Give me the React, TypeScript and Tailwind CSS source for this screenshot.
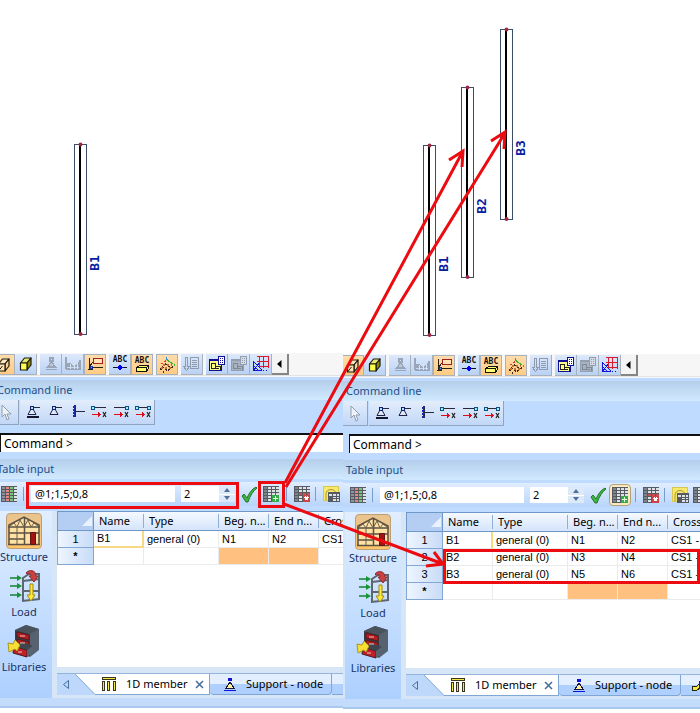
import React from "react";
import type { ReactNode } from "react";

type Member = { x: number; y: number; name: string };
type Row = { id: string; name: string; type: string; beg: string; end: string; cross: string };

const firstRow: Row = { id: "1", name: "B1", type: "general (0)", beg: "N1", end: "N2", cross: "CS1 - " };
const copies: Row[] = [
  { id: "2", name: "B2", type: "general (0)", beg: "N3", end: "N4", cross: "CS1 - " },
  { id: "3", name: "B3", type: "general (0)", beg: "N5", end: "N6", cross: "CS1 - " },
];

function Icon({ size = 20, children }: { size?: number; children: ReactNode }) {
  return (
    <svg width={size} height={size} viewBox={`0 0 ${size} ${size}`} className="block shrink-0" fill="none" shapeRendering="crispEdges" aria-hidden="true">
      {children}
    </svg>
  );
}

function Box({ yellow }: { yellow?: boolean }) {
  return (
    <Icon>
      <g shapeRendering="auto" stroke="#1c1a10" strokeWidth="1.2" strokeLinejoin="round">
        <path d="m4.500 9 4-5h6.500l-4 5z" fill={yellow ? "#e8e870" : "#fde6bd"} />
        <path d="m11 9 4-5v7l-4 5z" fill={yellow ? "#8c8c00" : "#fbd19a"} />
        <path d="M4.500 9H11v7H4.500z" fill={yellow ? "#ffff50" : "#ffe2b4"} />
        {!yellow && <path d="m4.500 16 4-5" strokeWidth="1" />}
      </g>
    </Icon>
  );
}

function GreySupport() {
  return (
    <Icon>
      <path d="M9 4h3v3H9zM10.500 7v3M5 15.500h11" stroke="#9aa6b8" strokeWidth="1.500" />
      <path d="m10.500 8-4 5h8z" fill="#bcc8d8" stroke="#9aa6b8" strokeWidth="1.500" />
    </Icon>
  );
}

function GreyLoad() {
  return (
    <Icon>
      <path d="M3 3v12M3 14.500h15M17 6v9" stroke="#9aa6b8" strokeWidth="2" />
      <path d="M4 9h3l3 3 4-2 3-4v7H4z" fill="#9aa6b8" />
      <path d="M7.500 10v5M11.500 9v6M14.500 9v6" stroke="#d7e4f6" />
    </Icon>
  );
}

function Flag() {
  return (
    <Icon>
      <path d="M8.500 3.500h9v5h-9z" stroke="#a32020" fill="#ffe2b6" />
      <path d="M4.500 3v12M3 14.500h5M8 12.500h10M5 11l3-4" stroke="#262015" />
      <path d="M5.500 11.500h2v2h-2z" fill="#46b0e8" stroke="#1734a0" />
    </Icon>
  );
}

function Abc({ box }: { box?: boolean }) {
  return (
    <Icon>
      <text x="10" y="8" textAnchor="middle" className="fill-[#111] font-[DejaVu_Sans_Mono,monospace] text-[8px] font-bold">ABC</text>
      {box ? (
        <path d="M4.500 12.500 7.500 10.500h9v3l-2 2.500h-10zM4.500 12.500h10v3.500M14.500 12.500l2-2" fill="#ffff70" stroke="#111" />
      ) : (
        <>
          <path d="M3 13.500h14" stroke="#111" />
          <path d="m10 10.500 3 3-3 3-3-3z" fill="#0000ee" />
        </>
      )}
    </Icon>
  );
}

function Dots() {
  return (
    <Icon>
      <g strokeWidth="1.500" strokeDasharray="2 2">
        <path d="M9.500 3v3M9 6 2 10" stroke="#e03838" />
        <path d="m10 5 8 5" stroke="#2fb529" strokeDasharray="3 1" />
        <path d="m8 9 7 4M5 12l6 4M3 14l4 3M16 12l-6 4" stroke="#392b1d" />
        <path d="M6 10h9M4 13h12" stroke="#c77138" />
      </g>
      <path d="M9 2h1v3H9z" fill="#268fe1" />
    </Icon>
  );
}

function SortList() {
  return (
    <Icon>
      <path d="M3.500 3.500h2v9h2l-3 4-3-4h2z" stroke="#8f9bad" />
      <path d="M8.500 3.500h8v11h-8zM10 6.500h5M10 8.500h5M10 10.500h5M10 12.500h5" stroke="#8f9bad" />
    </Icon>
  );
}

function Windows({ grey }: { grey?: boolean }) {
  const dark = grey ? "#939eae" : "#101095";
  return (
    <Icon>
      <path d="M2.500 5.500h12v11h-12z" fill={grey ? "#a8b2c0" : "#ffff86"} stroke={dark} />
      <path d="M3 6h11" stroke={dark} strokeWidth="2" />
      <path d="M4.500 9v6M4 9.500h5M4 14.500h8M8.500 9v6M9 12.500h4v3" stroke={grey ? "#7f8998" : "#25251c"} />
      <path d="M11.500 2.500h6v8h-6z" fill={grey ? "#d4dbe5" : "#fff"} stroke={dark} />
      <path d="M13 4.500h1M15 4.500h1M13 6.500h1M15 6.500h1M13 8.500h1M15 8.500h1" stroke={dark} />
    </Icon>
  );
}

function Grid() {
  return (
    <Icon>
      <path d="M6 2.500h12M6 7.500h12M8 12.500h10M8.500 2v10M12.500 2v12M17.500 2v12" stroke="#d7192b" />
      <path d="M2.500 7v10M2 16.500h9M3 8l8 8M3 12l4 4M8 9l-5 7M12 16h1M15 16h1" stroke="#1414d8" />
    </Icon>
  );
}

function Tool({ label, on, gap, children }: { label: string; on?: boolean; gap?: boolean; children: ReactNode }) {
  return (
    <button
      aria-label={label}
      className={`flex h-[21px] w-[22px] shrink-0 items-center justify-center border-r border-b border-[#a9b1bc] ${gap ? "ml-[3px]" : ""} ${on ? "border-t border-l bg-gradient-to-b from-[#ffdcab] to-[#ffcb82]" : "bg-gradient-to-b from-[#dde9fb] to-[#b9d2f5]"}`}
    >
      {children}
    </button>
  );
}

function ViewToolbar() {
  return (
    <div className="flex h-[23px] w-full overflow-hidden border-b border-[#e4e4e4] bg-[#f6f6f6] pt-px">
      <div className="-ml-px flex">
        <Tool label="Wireframe" on><Box /></Tool>
        <Tool label="Solid"><Box yellow /></Tool>
        <Tool label="Supports" gap><GreySupport /></Tool>
        <Tool label="Loads"><GreyLoad /></Tool>
        <Tool label="Member data" on><Flag /></Tool>
        <Tool label="Node labels" gap><Abc /></Tool>
        <Tool label="Member labels" on><Abc box /></Tool>
        <Tool label="Mesh" on gap><Dots /></Tool>
        <Tool label="Sort" gap><SortList /></Tool>
        <Tool label="Window settings" gap><Windows /></Tool>
        <Tool label="Window list"><Windows grey /></Tool>
        <Tool label="Grid"><Grid /></Tool>
        <button aria-label="Previous" className="flex h-[21px] w-[17px] shrink-0 items-center justify-center border-r-2 border-b-2 border-[#858585] bg-[#f4f4f4]">
          <svg width="5" height="8" viewBox="0 0 5 8" aria-hidden="true"><path d="M4.500 0v8L0 4z" /></svg>
        </button>
      </div>
    </div>
  );
}

function SupportGlyph({ kind }: { kind: number }) {
  return (
    <Icon>
      {kind < 2 && (
        <>
          <path d="M9 5.500h8" stroke="#28283a" />
          <path d="m8 7-3 5.500h8L10 7z" fill="#dce8f8" stroke="#202042" shapeRendering="auto" />
          <path d="M7.500 4.500h3v3h-3z" fill="#a6e8ff" stroke="#152070" />
          {kind === 0 && <path d="M4 15h12" stroke="#151530" strokeWidth="2" />}
        </>
      )}
      {kind === 2 && (
        <>
          <path d="M8.500 3v12M9 9.500h9" stroke="#28283a" strokeWidth="1.500" />
          <path d="M8 4 6 6M8 7 6 9M8 10l-2 2M8 13l-2 2" stroke="#1b29a5" strokeWidth="1.500" />
        </>
      )}
      {kind > 2 && (
        <>
          <path d="M3 5.500h14" stroke="#28283a" />
          {kind !== 4 && <path d="M2.500 4.500h3v3h-3z" fill="#9cecff" stroke="#0c5085" />}
          {kind !== 3 && <path d="M14.500 4.500h3v3h-3z" fill="#9cecff" stroke="#0c5085" />}
          <path d="M3 12.500h8" stroke="#e00c18" />
          <path d="M9 10v5l3-2.500z" fill="#e00c18" />
          <path d="m14 10 3 5m0-5-3 5" stroke="#222" shapeRendering="auto" strokeWidth="1.200" />
        </>
      )}
    </Icon>
  );
}

function TableIcon({ mark }: { mark?: "add" | "remove" }) {
  return (
    <Icon size={18}>
      <path d="M1 1h16v16H1z" fill="#565b62" />
      {[2, 5, 8, 11, 14].map((y) =>
        [2, 6, 10, 14].map((x) => (
          <path
            key={`${x}-${y}`}
            d={`M${x} ${y}h3v2h-3z`}
            fill={mark ? (x === 2 ? "#7e858d" : mark === "remove" && y === 8 ? "#c75050" : "#dce2e8") : x === 6 ? "#ea8585" : x === 10 ? "#79c879" : x === 2 ? "#8c939c" : "#dce2e8"}
          />
        )),
      )}
      {mark === "add" && <path d="M10 10h7v7h-7z" fill="#34ad48" />}
      {mark === "add" && <path d="M13.500 11v5M11 13.500h5" stroke="#e8ffe8" />}
      {mark === "remove" && <path d="M10 10h7v7h-7z" fill="#cf4245" />}
      {mark === "remove" && <path d="m12 12 3 3m0-3-3 3" stroke="#fff" strokeWidth="1.500" />}
    </Icon>
  );
}

function ArcTable() {
  return (
    <Icon size={18}>
      <path d="M1.500 1.500h15v14h-15z" fill="#f7e96b" stroke="#d9c84f" />
      <path d="M4 15V9c0-6 10-6 10 0v3" stroke="#a99435" shapeRendering="auto" />
      <path d="M6 7h12v10H6z" fill="#565b62" />
      <path d="M7 9h3v2H7zM11 9h3v2h-3zM15 9h2v2h-2zM11 12h3v1h-3zM15 12h2v1h-2zM11 14h3v2h-3zM15 14h2v2h-2z" fill="#dce2e8" />
    </Icon>
  );
}

function Structure() {
  return (
    <svg width="34" height="34" viewBox="0 0 34 34" className="block" aria-hidden="true">
      <path d="M2 12 17 4l15 8v19H2z" fill="#ffe2a4" />
      <path d="M2 31V11l15-8 15 8v20M1 13h32M1 30.500h32M17.500 4v27M2 19h30M2 25h15" fill="none" stroke="#5b5144" strokeWidth="1.500" />
      <path d="m3 12 4-3 3 4 3-7 4 7 4-7 3 7 3-4 4 3M10 13v17" fill="none" stroke="#6a5e4c" />
      <path d="M23.500 18.500h5v12h-5z" fill="#a11414" stroke="#641414" />
    </svg>
  );
}

function Load() {
  return (
    <svg width="34" height="34" viewBox="0 0 34 34" className="block" aria-hidden="true">
      <path d="M16 32V9l6-4h10v26M16 12l16-2M16 22h16M15 32l18-2" fill="none" stroke="#5d6671" strokeWidth="2" />
      <path d="M3 9h9M3 17h9M3 26h9" stroke="#14832f" strokeWidth="1.500" />
      <path d="m10 6 5 3-5 3zM10 14l5 3-5 3zM10 23l5 3-5 3z" fill="#189438" />
      <path d="M19 4c3-4 10-3 10 3h2l-4 6-5-6h2c0-2-2-3-4-2z" fill="#ca4141" stroke="#8e2e30" />
      <path d="M23 15h3v11h2l-4 6-4-6h3z" fill="#ffe936" stroke="#a18b12" />
    </svg>
  );
}

function Libraries() {
  return (
    <svg width="34" height="34" viewBox="0 0 34 34" className="block" aria-hidden="true">
      <path d="m8 6 11-5 13 4v21l-9 7-15-5z" fill="#566270" />
      <path d="m8 6 15 4v22L8 28z" fill="#343d48" />
      <path d="m8 6 11-5 13 4-9 5z" fill="#4a525c" />
      <path d="m10 8 12 3v5l-12-3zM10 15l12 3v5l-12-3z" fill="#b51d23" stroke="#60171b" />
      <path d="m7 22 13 4v7L6 29z" fill="#c02028" stroke="#451a20" />
      <path d="m8 22 7-4 11 4-6 4z" fill="#3d4650" />
      <path d="m20 26 6-4v7l-6 4z" fill="#58646f" />
      <path d="M13 12h5M13 19h5M11 28h4" stroke="#ecc6bf" />
      <path d="m1 19 5 1 2-4 5 5-3 6-2-2-6 3z" fill="#f8df35" stroke="#ab961d" />
    </svg>
  );
}

function SectionTitle({ children }: { children: ReactNode }) {
  return <h2 className="flex h-5 items-center bg-gradient-to-b from-[#b4ceeb] to-[#d1eaff] px-[3px] text-[11px] leading-4 text-[#234f8a]">{children}</h2>;
}

function CommandLine({ id }: { id: string }) {
  return (
    <section className="border-t border-[#f5f9ff] bg-[#bfdbff] pt-[3px]">
      <SectionTitle>Command line</SectionTitle>
      <div className="flex h-[25px] gap-px">
        <button aria-label="Select" className="flex w-[25px] items-center justify-center border-r border-b border-[#91a4be] bg-gradient-to-b from-[#e3edfb] to-[#c1d7f7]">
          <svg width="12" height="17" viewBox="0 0 12 17" aria-hidden="true"><path d="M2 1v12l3-3 2 6 2-1-2-5h4z" fill="#edf2fa" stroke="#929dac" /></svg>
        </button>
        <div className="flex items-center border-r border-b border-[#91a4be] bg-gradient-to-b from-[#e3edfb] to-[#c1d7f7] pl-[2px]">
          {["Fixed support", "Hinge", "Clamp", "Begin x", "End x", "Both x"].map((name, i) => (
            <button key={name} aria-label={name} className="flex w-[22px] justify-center"><SupportGlyph kind={i} /></button>
          ))}
        </div>
      </div>
      <div className="pt-2 pl-1.5">
        <label htmlFor={`${id}-command`} className="sr-only">Command</label>
        <input id={`${id}-command`} defaultValue="Command >" className="block h-[19px] w-full border-t-2 border-l border-[#101010] bg-white px-[3px] text-[12px] leading-4 text-black outline-none" />
      </div>
    </section>
  );
}

function Divider() {
  return <span className="h-[14px] w-px shrink-0 bg-[#779dcc]" />;
}

function InputToolbar({ id, active }: { id: string; active?: boolean }) {
  return (
    <div className="flex h-6 items-center overflow-hidden bg-gradient-to-b from-[#e0edff] to-[#b9d5fb] pl-1.5">
      <button aria-label="Table" className="shrink-0"><TableIcon /></button>
      <span className="w-[5px] shrink-0" />
      <Divider />
      <input aria-label="Copy pattern" id={`${id}-pattern`} defaultValue="@1;1,5;0,8" className="ml-[7px] h-4 w-36 shrink-0 bg-white px-1 text-[11px] leading-4 outline-none" />
      <div className="ml-1.5 flex h-4 w-[54px] shrink-0 bg-white">
        <input aria-label="Copies" id={`${id}-copies`} defaultValue="2" className="h-4 w-[38px] px-[3px] text-[11px] leading-4 outline-none" />
        <div className="flex w-4 flex-col gap-px">
          <button aria-label="Increase" className="flex flex-1 items-center justify-center bg-[#dce9f9]"><svg width="6" height="4" aria-hidden="true"><path d="M0 4 3 0l3 4z" fill="#526f9c" /></svg></button>
          <button aria-label="Decrease" className="flex flex-1 items-center justify-center bg-[#dce9f9]"><svg width="6" height="4" aria-hidden="true"><path d="M0 0h6L3 4z" fill="#526f9c" /></svg></button>
        </div>
      </div>
      <button aria-label="Apply" className="ml-1.5 shrink-0">
        <svg width="17" height="17" viewBox="0 0 17 17" aria-hidden="true"><path d="m1 10 2-2 3 4C8 7 11 3 15 1l1 1c-4 3-7 8-9 14H5z" fill="#3cb543" stroke="#26762d" /></svg>
      </button>
      <button aria-label="Insert rows" className={`ml-0.5 flex h-[22px] w-[22px] shrink-0 items-center justify-center rounded-sm ${active ? "border border-[#b3a27c] bg-[#fbe9bd]" : ""}`}><TableIcon mark="add" /></button>
      <span className="w-1 shrink-0" />
      <Divider />
      <button aria-label="Delete rows" className="ml-1.5 shrink-0"><TableIcon mark="remove" /></button>
      <span className="w-1 shrink-0" />
      <Divider />
      <button aria-label="Cross-section table" className="ml-1.5 shrink-0"><ArcTable /></button>
      <button aria-label="Export table" className="ml-[3px] shrink-0"><TableIcon mark="add" /></button>
    </div>
  );
}

function SideButton({ label, active, children }: { label: string; active?: boolean; children: ReactNode }) {
  return (
    <button className="flex h-[55px] w-full flex-col items-center text-[11px] leading-4 text-[#17345f]">
      <span className={`flex h-9 w-9 items-center justify-center ${active ? "rounded-sm border border-[#bd9e75] bg-gradient-to-b from-[#e8c490] to-[#ffc568]" : ""}`}>{children}</span>
      <span>{label}</span>
    </button>
  );
}

function DataTable({ rows, edited }: { rows: Row[]; edited?: boolean }) {
  const cell = "overflow-hidden border-r border-b border-[#ebebeb] p-0 pl-[3px] whitespace-nowrap";
  return (
    <table className="w-[400px] table-fixed border-separate border-spacing-0 font-['Liberation_Sans',Arial,sans-serif] text-[11px] leading-4 text-black">
      <colgroup>
        <col className="w-[37px]" /><col className="w-[50px]" /><col className="w-[75px]" /><col className="w-[50px]" /><col className="w-[50px]" /><col />
      </colgroup>
      <thead>
        <tr className="h-5 font-['Noto_Sans',sans-serif]">
          <td className="border-t border-r border-b border-l border-[#6f97c8] bg-[#b3cdf3] p-0">
            <svg width="12" height="12" viewBox="0 0 12 12" className="ml-auto block" aria-hidden="true"><path d="M11 1v10H1z" fill="#eaf2ff" /></svg>
          </td>
          {["Name", "Type", "Beg. n...", "End n...", "Cross-section"].map((name) => (
            <th key={name} scope="col" className="overflow-hidden border-t border-b border-[#6f97c8] bg-gradient-to-b from-[#f5f9ff] to-[#d4e4fb] p-0 text-left font-normal whitespace-nowrap">
              <span className="block h-[14px] border-r border-[#8dafd8] pl-[5px] leading-[14px]">{name}</span>
            </th>
          ))}
        </tr>
      </thead>
      <tbody>
        {rows.map((row) => (
          <tr key={row.id} className="h-[17px]">
            <th scope="row" className="border-r border-b border-l border-[#82a6d5] bg-gradient-to-r from-[#eef5ff] to-[#c8dcf7] p-0 text-center font-normal">{row.id}</th>
            <td className={`overflow-hidden border-r border-b p-0 pl-[3px] leading-[15px] ${row.id === "1" ? `border-r-2 border-r-[#f6d885] ${edited ? "border-b-[#ebebeb]" : "border-b-2 border-b-[#f6d885]"}` : "border-[#ebebeb]"}`}>{row.name}</td>
            <td className={cell}>{row.type}</td>
            <td className={cell}>{row.beg}</td>
            <td className={cell}>{row.end}</td>
            <td className={cell}>{row.cross}</td>
          </tr>
        ))}
        <tr className="h-[17px]">
          <th scope="row" className="border-r border-b border-l border-[#82a6d5] bg-gradient-to-r from-[#eef5ff] to-[#c8dcf7] p-0 text-center font-bold">*</th>
          <td className={cell} />
          <td className={cell} />
          <td className={`${cell} bg-[#ffc080]`} />
          <td className={`${cell} bg-[#ffc080]`} />
          <td className={cell} />
        </tr>
      </tbody>
    </table>
  );
}

function SheetTabs() {
  return (
    <div role="tablist" className="flex h-[22px] overflow-hidden border-t border-[#94b4dc] bg-[#d9e7f8] text-[11px] leading-4 text-black">
      <button aria-label="Scroll tabs left" className="flex w-[18px] shrink-0 items-center justify-center bg-[#bed8fb]">
        <svg width="6" height="9" viewBox="0 0 6 9" aria-hidden="true"><path d="M5.500.5v8l-5-4z" fill="none" stroke="#47709f" /></svg>
      </button>
      <svg width="20" height="21" viewBox="0 0 20 21" className="block shrink-0" aria-hidden="true">
        <path d="M0 0h20v21H0z" fill="#bed8fb" /><path d="M0 0h20v20.500z" fill="#fff" /><path d="m0 0 20 20.500" stroke="#7fa7d6" />
      </svg>
      <div className="flex w-[115px] shrink-0 items-center border-r border-b border-[#7fa7d6] bg-white pl-[6px]">
        <button role="tab" aria-selected="true" className="flex items-center gap-[9px] whitespace-nowrap">
          <Icon size={16}>
            <path d="M1.500 1.500h13v2h-13zM1.500 5.500h2v9h-2zM6.500 5.500h2v9h-2zM12.500 5.500h2v9h-2z" fill="#f4e943" stroke="#39351c" />
          </Icon>
          1D member
        </button>
        <button aria-label="Close tab" className="ml-auto pr-[5px]"><svg width="9" height="9" viewBox="0 0 9 9" aria-hidden="true"><path d="m1 1 7 7m0-7L1 8" stroke="#426c99" strokeWidth="1.500" /></svg></button>
      </div>
      <button role="tab" aria-selected="false" className="flex w-[122px] shrink-0 items-center gap-[9px] rounded-b-sm border-r border-b border-[#7fa7d6] bg-gradient-to-b from-[#e3effe] from-50% to-[#afd0ff] to-50% pl-[13px] whitespace-nowrap">
        <Icon size={14}><path d="M7 5 3 11h8z" fill="#fff49d" stroke="#151545" /><path d="M5 1h4v3H5zM1 13h12v1H1z" fill="#1010db" /></Icon>
        Support - node
      </button>
      <button role="tab" aria-label="Line support" className="flex w-32 shrink-0 items-center border-b border-[#7fa7d6] bg-gradient-to-b from-[#e3effe] from-50% to-[#afd0ff] to-50% pl-2.5">
        <Icon size={14}><path d="M1 8h5l3-3v5l-3 2H1z" fill="#f4e943" stroke="#26250e" /><path d="M8 3h5v7H8z" fill="#1010db" /></Icon>
      </button>
    </div>
  );
}

function Canvas({ members }: { members: Member[] }) {
  return (
    <svg className="block h-[353px] w-full bg-white" role="img" aria-label="Structure view">
      {members.map(({ x, y, name }) => (
        <g key={name}>
          <path d={`M${x - 6.5} ${y + 0.5}h12v190h-12z`} fill="none" stroke="#3b4d68" shapeRendering="crispEdges" />
          <path d={`M${x - 1} ${y}v190`} stroke="#000" strokeWidth="2" shapeRendering="crispEdges" />
          <circle cx={x - 0.5} cy={y + 0.5} r="2" fill="#9d2941" />
          <circle cx={x - 0.5} cy={y + 190} r="2" fill="#9d2941" />
          <text transform={`translate(${x + 18} ${y + 119}) rotate(-90)`} textAnchor="middle" className="fill-[#0720a0] font-['DejaVu_Sans_Mono',monospace] text-[13px] font-bold">{name}</text>
        </g>
      ))}
    </svg>
  );
}

function Workspace({ id, members, rows, edited }: { id: string; members: Member[]; rows: Row[]; edited?: boolean }) {
  return (
    <div className="flex flex-col bg-[#bfdbff]">
      <Canvas members={members} />
      <ViewToolbar />
      <CommandLine id={id} />
      <section className="flex flex-col pt-[7px]">
        <SectionTitle>Table input</SectionTitle>
        <div className="pt-[3px]"><InputToolbar id={id} active={edited} /></div>
        <div className="mt-[5px] flex h-[187px] bg-[#d7e6f7]">
          <nav aria-label="Modules" className="ml-0.5 w-14 shrink-0 bg-gradient-to-b from-[#e1eeff] to-[#add0ff] pt-[2px]">
            <SideButton label="Structure" active><Structure /></SideButton>
            <SideButton label="Load"><Load /></SideButton>
            <SideButton label="Libraries"><Libraries /></SideButton>
          </nav>
          <div className="ml-[5px] flex min-w-0 flex-1 flex-col">
            <div className="h-[156px] overflow-hidden bg-white"><DataTable rows={rows} edited={edited} /></div>
            <div className="h-[6px]" />
            <SheetTabs />
          </div>
        </div>
        <div className="h-[10px] border-b-2 border-[#aac8ee] bg-[#c3dcfc]" />
      </section>
    </div>
  );
}

function Callouts() {
  return (
    <svg width="700" height="713" viewBox="0 0 700 713" className="pointer-events-none absolute top-0 left-0" fill="none" stroke="#ec0b10" strokeWidth="3" aria-hidden="true">
      <path d="M27.500 483.500h210v24h-210zM259.500 482.500h24v24h-24zM444.500 550.500h254v32h-254z" />
      <path d="M285 483 463 151M449 160l14-9-1 16" />
      <path d="m286 487 219-354M491 141l14-9-1 17" />
      <path d="m284 504 159 60M434 552l9 12-17 2" />
    </svg>
  );
}

export default function App() {
  return (
    <main className="relative flex w-full items-start overflow-hidden bg-white font-['Noto_Sans',sans-serif]">
      <div className="w-[49%] shrink-0 overflow-hidden">
        <div className="-ml-1.5">
          <Workspace id="before" members={[{ x: 87, y: 144, name: "B1" }]} rows={[firstRow]} />
        </div>
      </div>
      <div className="min-w-0 flex-1 overflow-hidden pt-px">
        <Workspace
          id="after"
          edited
          members={[{ x: 87, y: 144, name: "B1" }, { x: 125, y: 86, name: "B2" }, { x: 164, y: 28, name: "B3" }]}
          rows={[firstRow, ...copies]}
        />
      </div>
      <Callouts />
    </main>
  );
}
